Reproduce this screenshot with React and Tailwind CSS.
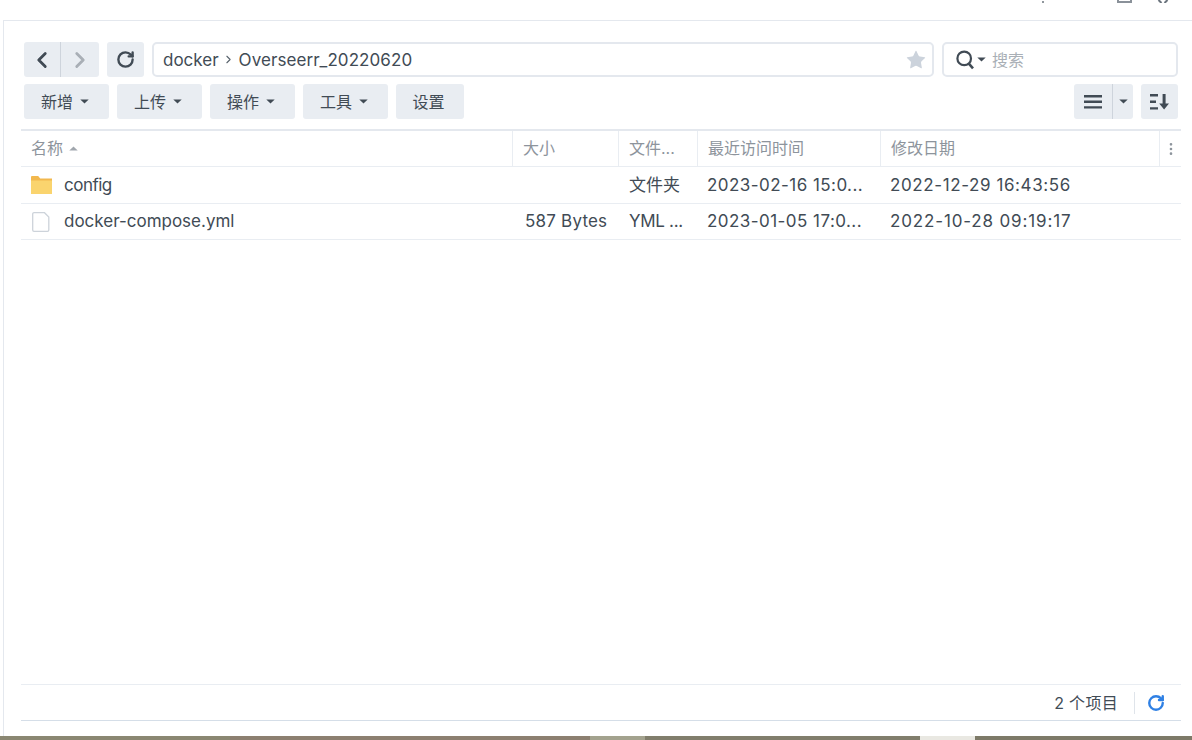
import { ChevronLeft, ChevronRight, RotateCw, Star, MoreVertical } from "lucide-react";

const font = { fontFamily: 'Inter, "Noto Sans CJK SC", sans-serif' };

function Caret({ className = "" }) {
    return (
        <svg width="9" height="5" viewBox="0 0 9 5" className={className}>
            <path d="M0.3 0.4H8.7L4.5 4.6Z" fill="currentColor" />
        </svg>
    );
}

function ToolButton({ label, width, caret = true }) {
    return (
        <button className={`h-[35px] ${width} flex items-center justify-center gap-[7px] pr-[3px] rounded-[3px] bg-[#e9edf2] text-[#414b55] text-base`}>
            {label}
            {caret && <Caret />}
        </button>
    );
}

function HeaderCell({ width, children, last }) {
    return (
        <div className={`${width} h-full flex items-center pl-[10px] pb-[1px] text-[#8d949c] text-base ${last ? "" : "border-r border-[#e9edf2]"}`}>
            {children}
        </div>
    );
}

function Cell({ width, children, pad = "pl-[10px]", tracking = "" }) {
    return (
        <div className={`${width} ${pad} ${tracking} pt-[1px] h-full flex items-center text-[#414b55] text-[17px] whitespace-nowrap overflow-hidden`}>
            {children}
        </div>
    );
}

function FolderIcon() {
    return (
        <svg width="21" height="18" viewBox="0 0 21 18" className="mb-[2px]">
            <path d="M0 1.2C0 .5.5 0 1.2 0h6l2 2.5H21V5H0Z" fill="#f2b84e" />
            <path d="M0 4.5h21V18H0Z" fill="#fad46e" />
        </svg>
    );
}

function FileIcon() {
    return (
        <svg width="18" height="20" viewBox="0 0 18 20" className="mb-[1px]">
            <path d="M2 .7h10.5l4.3 4.3V18a1.3 1.3 0 0 1-1.3 1.3H2A1.3 1.3 0 0 1 .7 18V2A1.3 1.3 0 0 1 2 .7Z" fill="#fff" stroke="#cdd3da" strokeWidth="1.3" />
        </svg>
    );
}

function SortIcon() {
    return (
        <svg width="20" height="16" viewBox="0 0 20 16" className="text-[#414b55]">
            <path d="M0 0h8v2.4H0ZM0 6.6h6V9H0ZM0 13.2h8v2.4H0Z" fill="currentColor" />
            <path d="M12.6 0h3v9.5h3.4l-4.9 6-4.9-6h3.4Z" fill="currentColor" />
        </svg>
    );
}

function ListIcon() {
    return (
        <svg width="18" height="14" viewBox="0 0 18 14" className="text-[#414b55]">
            <path d="M0 0h18v2.4H0ZM0 5.6h18V8H0ZM0 11.2h18v2.4H0Z" fill="currentColor" />
        </svg>
    );
}

function SearchIcon() {
    return (
        <svg width="19" height="20" viewBox="0 0 19 20" fill="none" stroke="#414b55" strokeWidth="2.2">
            <circle cx="8.2" cy="8.4" r="6.8" />
            <path d="M12.6 13.4L17 18.4" strokeWidth="2.6" />
        </svg>
    );
}

function App() {
    return (
        <div className="relative h-[740px] w-[1192px] overflow-hidden bg-white flex flex-col" style={font}>
            {/* clipped window buttons */}
            <div className="h-5 flex justify-end items-start shrink-0">
                <div className="w-[2px] h-[2px] mt-[1px] rounded-full bg-[#6b747d] mr-[73px]" />
                <div className="w-[15px] h-[3px] border-b-2 border-x-2 border-[#8a9199] mr-[25px]" />
                <svg width="12" height="3" viewBox="0 0 12 3" className="mr-[23px]">
                    <path d="M1.5 0l3 3M10.5 0L7.5 3" stroke="#6b747d" strokeWidth="2" />
                </svg>
            </div>

            <div className="flex-1 ml-[3px] border-l border-t border-[#e4e8ee] flex flex-col pl-[17px] pr-[11px] min-h-0">
                {/* path bar */}
                <div className="mt-[21px] pl-[3px] pr-[3px] flex items-center h-[35px]">
                    <div className="flex h-[35px] w-[75px] rounded-[3px] bg-[#e9edf2] overflow-hidden">
                        <button className="w-[37px] flex items-center justify-center border-r border-[#ced4dc]">
                            <ChevronLeft size={26} strokeWidth={2.6} className="text-[#414b55]" />
                        </button>
                        <button className="flex-1 flex items-center justify-center">
                            <ChevronRight size={26} strokeWidth={2.6} className="text-[#a9afb6]" />
                        </button>
                    </div>
                    <button className="ml-2 w-[37px] h-[35px] rounded-[3px] bg-[#e9edf2] flex items-center justify-center">
                        <RotateCw size={19} strokeWidth={3} className="text-[#414b55]" />
                    </button>
                    <div className="ml-2 w-[782px] h-[35px] rounded-[5px] border-2 border-[#e4e8ee] flex items-center pl-[9px] pr-[5px] pt-[2px] text-[#414b55] text-[17px]">
                        docker
                        <ChevronRight size={13} strokeWidth={2} className="ml-[3px] mr-[4px] mb-[2px] text-[#59636d]" />
                        <span className="tracking-[0.07px]">Overseerr_20220620</span>
                        <Star size={22} fill="#ccd3dc" strokeWidth={0} className="ml-auto mb-[2px]" />
                    </div>
                    <div className="ml-2 flex-1 h-[35px] rounded-[5px] border-2 border-[#e4e8ee] flex items-center pl-[12px]">
                        <SearchIcon />
                        <Caret className="ml-[2px] text-[#414b55]" />
                        <span className="ml-[6px] text-[#a9afb6] text-base">搜索</span>
                    </div>
                </div>

                {/* action bar */}
                <div className="mt-[7px] pl-[3px] pr-[3px] flex items-center gap-2">
                    <ToolButton label="新增" width="w-[85px]" />
                    <ToolButton label="上传" width="w-[85px]" />
                    <ToolButton label="操作" width="w-[85px]" />
                    <ToolButton label="工具" width="w-[85px]" />
                    <ToolButton label="设置" width="w-[68px]" caret={false} />
                    <div className="ml-auto flex h-[35px] w-[59px] rounded-[3px] bg-[#e9edf2] overflow-hidden">
                        <div className="w-[39px] flex items-center justify-center border-r border-[#ced4dc]">
                            <ListIcon />
                        </div>
                        <div className="flex-1 flex items-center justify-center text-[#414b55]">
                            <Caret />
                        </div>
                    </div>
                    <div className="w-[37px] h-[35px] rounded-[3px] bg-[#e9edf2] flex items-center justify-center">
                        <SortIcon />
                    </div>
                </div>

                {/* file list */}
                <div className="mt-[10px] border-t-2 border-[#e4e8ee]">
                    <div className="h-[36px] flex items-center border-b border-[#e9edf2]">
                        <HeaderCell width="w-[492px]">
                            名称
                            <Caret className="ml-[6px] rotate-180 text-[#a0a6ad]" />
                        </HeaderCell>
                        <HeaderCell width="w-[106px]">大小</HeaderCell>
                        <HeaderCell width="w-[79px]">文件...</HeaderCell>
                        <HeaderCell width="w-[183px]">最近访问时间</HeaderCell>
                        <HeaderCell width="w-[279px]">修改日期</HeaderCell>
                        <div className="flex-1 flex justify-center text-[#8d949c]">
                            <MoreVertical size={16} strokeWidth={2} />
                        </div>
                    </div>
                    <div className="h-[37px] flex items-center border-b border-[#e9edf2]">
                        <Cell width="w-[492px]" tracking="tracking-[-0.5px]">
                            <span className="w-[33px] flex shrink-0"><FolderIcon /></span>
                            config
                        </Cell>
                        <Cell width="w-[106px]" />
                        <Cell width="w-[79px]">文件夹</Cell>
                        <Cell width="w-[183px]" pad="pl-[9px]" tracking="tracking-[0.45px]">2023-02-16 15:0...</Cell>
                        <Cell width="w-[279px]" pad="pl-[9px]" tracking="tracking-[0.6px]">2022-12-29 16:43:56</Cell>
                    </div>
                    <div className="h-[36px] flex items-center border-b border-[#e9edf2]">
                        <Cell width="w-[492px]">
                            <span className="w-[33px] flex shrink-0 pl-[1px]"><FileIcon /></span>
                            docker-compose.yml
                        </Cell>
                        <Cell width="w-[106px]" pad="pl-[12px]" tracking="tracking-[0.2px]">587 Bytes</Cell>
                        <Cell width="w-[79px]" tracking="tracking-[-0.3px]">YML ...</Cell>
                        <Cell width="w-[183px]" pad="pl-[9px]" tracking="tracking-[0.45px]">2023-01-05 17:0...</Cell>
                        <Cell width="w-[279px]" pad="pl-[9px]" tracking="tracking-[0.85px]">2022-10-28 09:19:17</Cell>
                    </div>
                </div>

                {/* status bar */}
                <div className="mt-auto mb-[15px] h-[37px] border-t border-b border-t-[#e9edf2] border-b-[#d5dee8] flex items-center justify-end">
                    <span className="text-[#414b55] text-base tracking-[0.3px]">2 个项目</span>
                    <div className="ml-4 mr-[12px] w-px h-[22px] bg-[#dfe4ea]" />
                    <RotateCw size={18} strokeWidth={3.2} className="mr-[16px] text-[#2f80e4]" />
                </div>
            </div>

            {/* wallpaper strip under the window */}
            <div className="h-1 shrink-0 flex">
                <div className="w-[230px] bg-[#8a8772]" />
                <div className="w-[360px] bg-[#8c7f70]" />
                <div className="w-[55px] bg-[#a3a28e]" />
                <div className="w-[275px] bg-[#817e6c]" />
                <div className="w-[55px] bg-[#e9e8e2]" />
                <div className="flex-1 bg-[#7d7a68]" />
            </div>
        </div>
    );
}

export default App;
